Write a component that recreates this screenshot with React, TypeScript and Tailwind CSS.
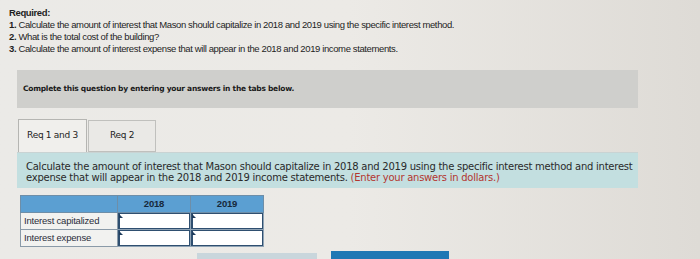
import React from "react";

const sans = "font-['Liberation_Sans',Arial,sans-serif]";
const verdana = "font-['DejaVu_Sans',Verdana,sans-serif]";

function InputCell() {
  return (
    <td className="relative h-[17px] w-[73px] border border-[#8fa3b5] p-0">
      <div className="h-full w-full border border-[#2f4f70] border-l-2 bg-white" />
      <span className="absolute left-[1px] top-[1px] h-0 w-0 border-l-[4px] border-t-[4px] border-l-[#1f3c5c] border-t-transparent" />
    </td>
  );
}

export default function App() {
  return (
    <div className="h-[259px] w-[700px] overflow-hidden bg-gradient-to-r from-[#ebeae7] via-[#eceae6] to-[#dedbd6] text-[#1e1e1e]">
      {/* Required list */}
      <div className={`${sans} pl-[9px] pt-[7px] text-[9.5px] leading-[12px] tracking-[-0.38px]`}>
        <p className="font-bold">Required:</p>
        <p>
          <span className="font-bold">1.</span> Calculate the amount of interest that Mason should capitalize in 2018 and 2019 using the specific interest method.
        </p>
        <p>
          <span className="font-bold">2.</span> What is the total cost of the building?
        </p>
        <p>
          <span className="font-bold">3.</span> Calculate the amount of interest expense that will appear in the 2018 and 2019 income statements.
        </p>
      </div>

      {/* Instruction banner */}
      <div className="ml-[17px] mt-[15px] flex h-[38px] w-[621px] items-center bg-[#cfcfcc] pl-[6px]">
        <p className={`${verdana} text-[7.5px] font-bold tracking-[-0.25px] text-[#1a1a1a]`}>
          Complete this question by entering your answers in the tabs below.
        </p>
      </div>

      {/* Tabs */}
      <div className="ml-[17px] mt-[11px] w-[621px]">
        <div className="flex items-end gap-[1px] pl-[1px]">
          <div className={`${verdana} flex h-[33px] w-[69px] items-center justify-center border border-b-0 border-[#b5b5b2] bg-[#f0efec] text-[9px] tracking-[-0.3px] text-[#222]`}>
            Req 1 and 3
          </div>
          <div className={`${verdana} flex h-[32px] w-[68px] items-center justify-center border border-[#c0c0bd] bg-[#eae9e6] text-[9px] tracking-[-0.3px] text-[#222]`}>
            Req 2
          </div>
        </div>

        {/* Question panel */}
        <div className={`${verdana} h-[36px] border-t border-[#c9d3d3] bg-[#c3dfe0] pl-[9px] pt-[8px] text-[10px] leading-[11px] tracking-[-0.25px] text-[#2a2a2a]`}>
          <p>
            Calculate the amount of interest that Mason should capitalize in 2018 and 2019 using the specific interest method and interest
          </p>
          <p>
            expense that will appear in the 2018 and 2019 income statements.{" "}
            <span className="text-[#b3362f]">(Enter your answers in dollars.)</span>
          </p>
        </div>
      </div>

      {/* Answer table */}
      <table className={`${sans} ml-[20px] mt-[7px] border-collapse text-[9.5px] tracking-[-0.2px]`}>
        <thead>
          <tr className="h-[17px] bg-[#5b9fd2]">
            <th className="w-[97px] border border-[#6e8ea8]" />
            <th className="w-[73px] border border-[#6e8ea8] font-bold text-[#16283a]">2018</th>
            <th className="w-[73px] border border-[#6e8ea8] font-bold text-[#16283a]">2019</th>
          </tr>
        </thead>
        <tbody>
          <tr className="h-[17px]">
            <td className="border border-[#8a9aa8] bg-[#f2f2f0] pl-[3px] text-[#2a2d3a]">Interest capitalized</td>
            <InputCell />
            <InputCell />
          </tr>
          <tr className="h-[17px]">
            <td className="border border-[#8a9aa8] bg-[#f2f2f0] pl-[3px] text-[#2a2d3a]">Interest expense</td>
            <InputCell />
            <InputCell />
          </tr>
        </tbody>
      </table>

      {/* Bottom nav buttons */}
      <div className="ml-[197px] mt-[4px] flex items-end gap-[14px]">
        <div className="h-[7px] w-[120px] bg-[#c9d6dc]" />
        <div className="h-[9px] w-[118px] bg-[#1f78b4]" />
      </div>
    </div>
  );
}
